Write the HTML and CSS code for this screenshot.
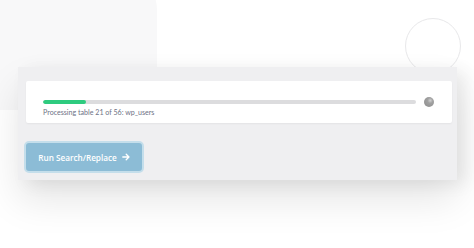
FILE: index.html
```html
<!DOCTYPE html>
<html>
<head>
<meta charset="utf-8">
<link rel="stylesheet" href="styles.css">
</head>
<body>
<div class="stage">
  <div class="blob"></div>
  <div class="ring"></div>
  <div class="panel">
    <div class="card">
      <div class="progress-row">
        <div class="track"><div class="fill" style="width:11.5%"></div></div>
        <span class="dot"></span>
      </div>
      <div class="status">Processing table 21 of 56: wp_users</div>
    </div>
    <button class="run-btn">Run Search/Replace <svg class="arrow" width="8" height="8" viewBox="0 0 8 8"><path d="M0.8 4H7M4.2 1.2L7 4L4.2 6.8" fill="none" stroke="#fff" stroke-width="1.3" stroke-linecap="round" stroke-linejoin="round"/></svg></button>
  </div>
</div>
</body>
</html>
```
FILE: styles.css
```css
html, body {
  margin: 0;
  padding: 0;
  background: #ffffff;
}
.stage {
  position: relative;
  width: 474px;
  height: 248px;
  overflow: hidden;
  font-family: "Lato", "Open Sans", sans-serif;
}
.blob {
  position: absolute;
  left: -40px;
  top: -30px;
  width: 197px;
  height: 140px;
  background: #f8f8f9;
  border-radius: 0 40px 30px 30px;
}
.ring {
  position: absolute;
  left: 405px;
  top: 18px;
  width: 54px;
  height: 54px;
  border: 1px solid #e8e8ea;
  border-radius: 50%;
}
.panel {
  position: relative;
  margin: 67px 0 0 18px;
  width: 439px;
  height: 113px;
  box-sizing: border-box;
  background: #efeff1;
  padding: 14px 5px 0 7px;
  box-shadow: 0 20px 36px rgba(0, 0, 0, 0.10), 9px 4px 16px rgba(0, 0, 0, 0.07);
  display: flex;
  flex-direction: column;
}
.card {
  margin-left: 1px;
  width: 426px;
  height: 42px;
  box-sizing: border-box;
  background: #ffffff;
  border-radius: 2px;
  box-shadow: 0 1px 2px rgba(0, 0, 0, 0.05);
  padding: 16px 18px 0 17px;
}
.progress-row {
  display: flex;
  align-items: center;
  gap: 8px;
  height: 10px;
}
.track {
  flex: 1;
  height: 4px;
  background: #dcdcde;
  border-radius: 2px;
  overflow: hidden;
}
.fill {
  height: 100%;
  background: #2ecb7f;
  border-radius: 2px;
}
.dot {
  width: 10px;
  height: 10px;
  border-radius: 50%;
  background: radial-gradient(circle at 62% 35%, #d0d0d0 0, #a0a0a0 30%, #8c8c8c 100%);
}
.status {
  margin-top: 1px;
  font-size: 7.1px;
  line-height: 10px;
  color: #6d7285;
}
.run-btn {
  margin-top: 18px;
  margin-left: -1px;
  width: 120px;
  height: 32px;
  box-sizing: border-box;
  background: #8cbcd6;
  border: 2px solid #c4deeb;
  border-radius: 5px;
  color: #ffffff;
  font-family: "Open Sans", "Noto Sans", sans-serif;
  font-weight: 600;
  font-size: 8.2px;
  display: flex;
  align-items: center;
  justify-content: center;
  gap: 5px;
  padding: 0;
}
.arrow {
  display: block;
}
```
